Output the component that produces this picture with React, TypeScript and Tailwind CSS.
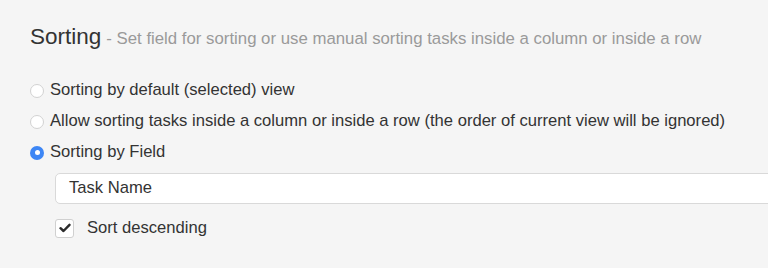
import React from "react";

function Radio({ checked }: { checked?: boolean }) {
  if (checked) {
    return (
      <span className="flex h-[14px] w-[14px] shrink-0 items-center justify-center rounded-full bg-[#3d86f5]">
        <span className="h-[5px] w-[5px] rounded-full bg-white" />
      </span>
    );
  }
  return (
    <span className="h-[14px] w-[14px] shrink-0 rounded-full border border-[#d2d2d2] bg-white" />
  );
}

export default function App() {
  return (
    <div
      className="h-[268px] w-[768px] overflow-hidden bg-[#f5f5f5] pl-[30px] pt-[24px] text-[#333]"
      style={{ fontFamily: '"Liberation Sans", Arial, sans-serif' }}
    >
      <div className="flex items-baseline leading-[26px] whitespace-nowrap">
        <span className="text-[22.5px] text-[#333]">Sorting</span>
        <span className="ml-[5px] text-[16.8px] text-[#9a9a9a]">
          - Set field for sorting or use manual sorting tasks inside a column or inside a row
        </span>
      </div>
      <div className="mt-[23px] flex flex-col text-[16.6px]">
        <label className="flex h-[31px] items-center gap-[6px] whitespace-nowrap">
          <Radio />
          <span>Sorting by default (selected) view</span>
        </label>
        <label className="flex h-[31px] items-center gap-[6px] whitespace-nowrap">
          <Radio />
          <span>Allow sorting tasks inside a column or inside a row (the order of current view will be ignored)</span>
        </label>
        <label className="flex h-[31px] items-center gap-[6px] whitespace-nowrap">
          <Radio checked />
          <span>Sorting by Field</span>
        </label>
        <div className="ml-[25px] mt-[5px] flex h-[31px] w-[760px] shrink-0 items-center rounded-[5px] border border-[#d9d9d9] bg-white pl-[13px]">
          Task Name
        </div>
        <div className="ml-[25px] mt-[12px] flex items-center">
          <span className="flex h-[19px] w-[19px] items-center justify-center rounded-[3px] border border-[#d0d0d0] bg-white">
            <svg width="12" height="10" viewBox="0 0 12 10">
              <path d="M1.5 5.2 L4.5 8 L10.5 1.8" fill="none" stroke="#2b2b2b" strokeWidth="2.4" strokeLinecap="round" strokeLinejoin="round" />
            </svg>
          </span>
          <span className="ml-[13px]">Sort descending</span>
        </div>
      </div>
    </div>
  );
}
